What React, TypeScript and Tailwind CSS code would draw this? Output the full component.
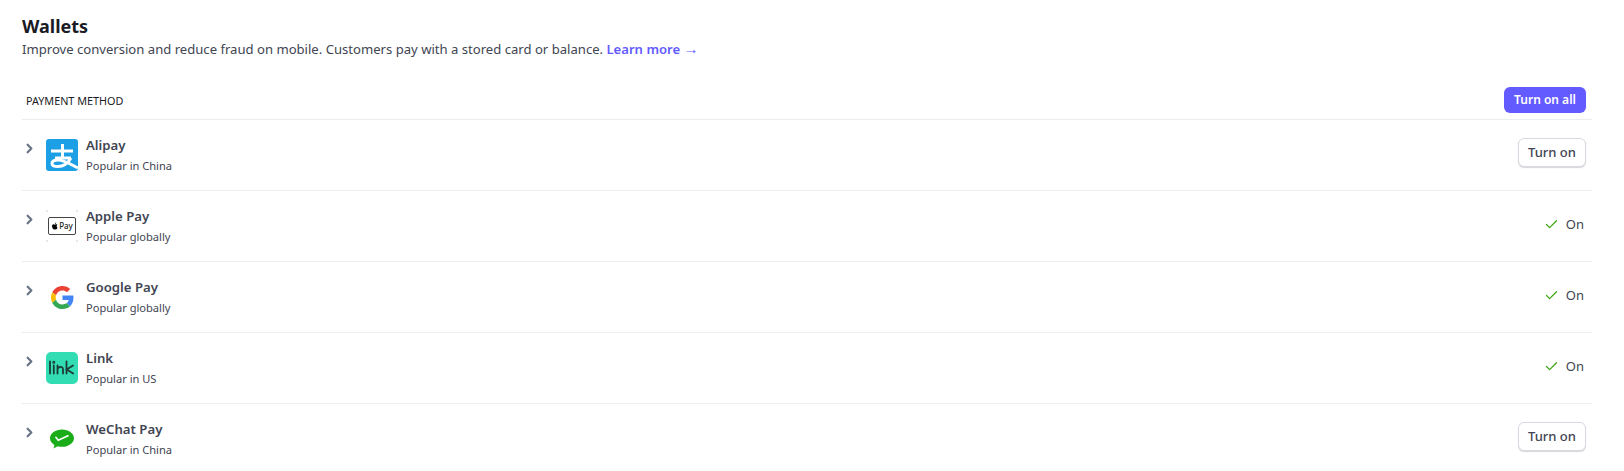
import { Check, ChevronRight } from "lucide-react";
import type { ReactNode } from "react";

function AlipayIcon() {
  return (
    <div className="flex h-8 w-8 items-center justify-center overflow-hidden rounded-[3px] bg-[#1c9fe5]">
      <svg viewBox="0 0 32 32" className="h-8 w-8" fill="none" stroke="#fff" strokeWidth="3">
        <path d="M5 12H27M16.500 5v14M9 19h16" />
        <path d="M25 19c-3 5-8 8.500-13 8.500-4 0-6-1-6-3 0-2.500 3-3.500 6-3.500 6 0 12 4 20 8" />
      </svg>
    </div>
  );
}

function ApplePayIcon() {
  return (
    <div className="relative flex h-8 w-8 items-center justify-center">
      <span className="absolute left-0 top-0 h-[2px] w-[2px] bg-gray-200" />
      <span className="absolute right-0 top-0 h-[2px] w-[2px] bg-gray-200" />
      <span className="absolute bottom-0 left-0 h-[2px] w-[2px] bg-gray-200" />
      <span className="absolute bottom-0 right-0 h-[2px] w-[2px] bg-gray-200" />
      <div className="flex h-[18px] w-[28px] items-center justify-center rounded-[2px] border border-[#444] bg-white text-[8px] font-medium leading-none text-[#222]">
        <svg viewBox="0 0 10 12" className="mr-px h-[8px] w-[7px]" fill="#000">
          <path d="M8.300 6.300c0-1.300 1-1.900 1.100-2-.6-.9-1.500-1-1.900-1-.8-.1-1.600.5-2 .5s-1-.5-1.700-.5c-.9 0-1.700.5-2.100 1.300-.9 1.600-.2 3.900.7 5.200.4.600.9 1.300 1.600 1.300.6 0 .9-.4 1.700-.4s1 .4 1.700.4 1.100-.6 1.500-1.300c.5-.7.7-1.400.7-1.400s-1.300-.6-1.300-2.100zM7 2.400c.3-.4.600-1 .5-1.600-.5 0-1.100.3-1.500.8-.3.4-.6 1-.5 1.500.6 0 1.200-.3 1.500-.7z" />
        </svg>
        Pay
      </div>
    </div>
  );
}

function GoogleIcon() {
  return (
    <div className="flex h-8 w-8 items-center justify-center">
      <svg viewBox="0 0 48 48" className="h-[23px] w-[23px]">
        <path fill="#ea4335" d="M24 9.500c3.500 0 6.700 1.200 9.200 3.600l6.900-6.900C35.900 2.400 30.500 0 24 0 14.600 0 6.500 5.400 2.600 13.200l8 6.200C12.400 13.700 17.700 9.500 24 9.500z" />
        <path fill="#4285f4" d="M46.900 24.500c0-1.600-.1-3.100-.4-4.500H24v9h12.900c-.6 3-2.200 5.400-4.700 7.100l7.700 6c4.500-4.200 7-10.300 7-17.600z" />
        <path fill="#fbbc05" d="M10.500 28.600c-.5-1.500-.8-3-.8-4.600s.3-3.200.8-4.600l-8-6.200C.9 16.500 0 20.100 0 24s.9 7.500 2.600 10.800l7.900-6.200z" />
        <path fill="#34a853" d="M24 48c6.500 0 11.900-2.100 15.900-5.800l-7.700-6c-2.200 1.400-4.900 2.300-8.200 2.300-6.300 0-11.600-4.200-13.500-10l-8 6.200C6.500 42.600 14.600 48 24 48z" />
      </svg>
    </div>
  );
}

function LinkIcon() {
  return (
    <div className="flex h-8 w-8 items-center justify-center rounded-[5px] bg-[#33ddb3]">
      <svg viewBox="0 0 32 32" className="h-8 w-8" fill="none" stroke="#1d3b36" strokeWidth="1.800" strokeLinecap="round">
        <path d="M4 9.500v12M7.800 13.500v8M11.500 21.500v-8M11.500 17c.8-2.600 5.500-3.400 5.500.5v4M20.500 9.500v12M27 13.500l-6.300 4 6.500 4" />
        <circle cx="7.800" cy="10.300" r=".6" />
      </svg>
    </div>
  );
}

function WeChatIcon() {
  return (
    <div className="flex h-8 w-8 items-center justify-center">
      <svg viewBox="0 0 24 20" className="h-[21px] w-[24px]">
        <path fill="#1aad19" d="M12 0C5.400 0 0 3.900 0 8.700c0 2.700 1.700 5.100 4.400 6.700l-.9 3.600 4.100-2.300c1.400.4 2.900.6 4.400.6 6.600 0 12-3.900 12-8.600S18.600 0 12 0z" />
        <path fill="none" stroke="#fff" strokeWidth="1.700" strokeLinecap="round" d="M6 8l2.300 2.800L18 6.300" />
      </svg>
    </div>
  );
}

function Row({
  icon,
  name,
  desc,
  on,
}: {
  icon: ReactNode;
  name: string;
  desc: string;
  on?: boolean;
}) {
  return (
    <div className="flex h-[71px] items-start border-b border-[#ebeef1] last:border-b-0">
      <ChevronRight className="mt-[21px] h-[15px] w-[15px] text-[#687385]" strokeWidth={3.500} />
      <div className="ml-[9px] mt-[19px]">{icon}</div>
      <div className="ml-[8px] mt-[16px]">
        <p className="text-[13.200px] font-semibold leading-[19px] text-[#414552]">{name}</p>
        <p className="mt-[3px] text-[11.100px] leading-[16px] text-[#414552]">{desc}</p>
      </div>
      <div className="ml-auto mr-[6px] mt-[18px]">
        {on ? (
          <div className="mr-[2px] mt-[5px] flex items-center gap-[7px] text-[13px] leading-[20px] text-[#414552]">
            <Check className="h-[15px] w-[15px] text-[#3ea512]" strokeWidth={2} />
            On
          </div>
        ) : (
          <button className="h-[29px] w-[68px] rounded-[6px] border border-[#d5dbe1] bg-white text-[13px] font-medium text-[#414552] shadow-[0_1px_1px_rgba(0,0,0,0.16)]">
            Turn on
          </button>
        )}
      </div>
    </div>
  );
}

export default function App() {
  return (
    <div className="min-h-[471px] bg-white pl-[22px] pr-[32px] pt-[14px] font-['Noto_Sans',sans-serif]">
      <h1 className="text-[18px] font-bold leading-[24px] text-[#1a1b25]">Wallets</h1>
      <p className="mt-[1px] text-[13.100px] leading-[20px] text-[#414552]">
        Improve conversion and reduce fraud on mobile. Customers pay with a stored card or balance.{" "}
        <a href="#" className="font-semibold text-[#635bff]">
          Learn more <span className="text-[15px] font-medium leading-none">→</span>
        </a>
      </p>
      <div className="mt-[28px] flex h-[33px] items-start justify-between border-b border-[#ebeef1] pl-[4px] pr-[6px]">
        <span className="mt-[4px] text-[10.800px] leading-[20px] text-[#1a1b25]">PAYMENT METHOD</span>
        <button className="h-[26px] w-[82px] rounded-[6px] bg-[#635bff] text-[12px] font-semibold text-white">
          Turn on all
        </button>
      </div>
      <Row icon={<AlipayIcon />} name="Alipay" desc="Popular in China" />
      <Row icon={<ApplePayIcon />} name="Apple Pay" desc="Popular globally" on />
      <Row icon={<GoogleIcon />} name="Google Pay" desc="Popular globally" on />
      <Row icon={<LinkIcon />} name="Link" desc="Popular in US" on />
      <Row icon={<WeChatIcon />} name="WeChat Pay" desc="Popular in China" />
    </div>
  );
}
